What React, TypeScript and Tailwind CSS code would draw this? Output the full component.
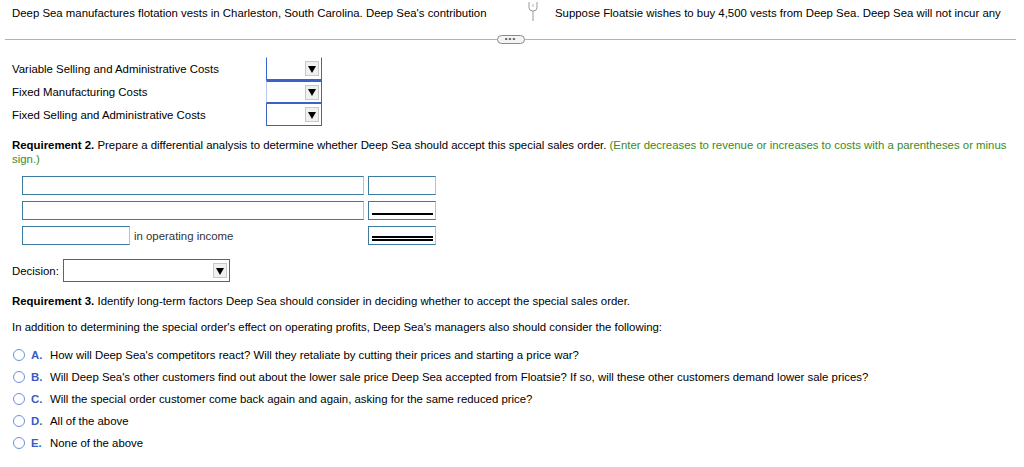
import React from 'react';

const font = { fontFamily: '"Liberation Sans", Arial, sans-serif' };

function Arrow() {
  return (
    <span className="flex h-[15px] w-[14px] items-center justify-center border border-[#c8c8c8] bg-[#f0f0f0]">
      <svg width="8" height="8" viewBox="0 0 8 8">
        <polygon points="0,1 8,1 4,8" fill="#000" />
      </svg>
    </span>
  );
}

function Select({ w, extra = '' }: { w: string; extra?: string }) {
  return (
    <div className={`flex h-[23px] items-center justify-end border border-[#3b62c6] bg-white pr-[2px] ${w} ${extra}`}>
      <Arrow />
    </div>
  );
}

function Box({ w, line }: { w: string; line?: 'single' | 'double' }) {
  return (
    <div className={`relative h-[19px] border border-[#3d7aa0] border-r-[#a9c6d8] bg-white ${w}`}>
      {line === 'single' && <div className="absolute bottom-[4px] left-[3px] right-[2px] h-[2px] bg-black" />}
      {line === 'double' && (
        <div className="absolute bottom-[3px] left-[3px] right-[2px] flex flex-col gap-[1px]">
          <div className="h-[2px] bg-black" />
          <div className="h-[2px] bg-black" />
        </div>
      )}
    </div>
  );
}

const options = [
  ['A.', "How will Deep Sea's competitors react? Will they retaliate by cutting their prices and starting a price war?"],
  ['B.', "Will Deep Sea's other customers find out about the lower sale price Deep Sea accepted from Floatsie? If so, will these other customers demand lower sale prices?"],
  ['C.', 'Will the special order customer come back again and again, asking for the same reduced price?'],
  ['D.', 'All of the above'],
  ['E.', 'None of the above'],
];

export default function App() {
  return (
    <div className="h-[467px] w-[1024px] overflow-hidden bg-white text-[11.4px] leading-[14px] text-black" style={font}>
      {/* top split panes */}
      <div className="flex h-[33px] items-start">
        <div className="w-[518px] pl-[12px] pt-[6px]">
          Deep Sea manufactures flotation vests in Charleston, South Carolina. Deep Sea's contribution
        </div>
        <div className="w-[37px] pl-[9px] pt-[1px]">
          <svg width="12" height="20" viewBox="0 0 12 20">
            <path d="M2 1 V7 Q2 10 6 10 Q10 10 10 7 V1" fill="none" stroke="#9a9a9a" strokeWidth="1" />
            <line x1="6" y1="10" x2="6" y2="20" stroke="#9a9a9a" strokeWidth="1" />
            <line x1="6" y1="3" x2="6" y2="6" stroke="#b5b5b5" strokeWidth="1" />
          </svg>
        </div>
        <div className="flex-1 pt-[6px]">
          Suppose Floatsie wishes to buy 4,500 vests from Deep Sea. Deep Sea will not incur any
        </div>
      </div>

      {/* divider */}
      <div className="flex h-[12px] items-center pl-[5px] pr-[8px]">
        <div className="h-px flex-1 bg-[#b3b3b3]" />
        <div className="flex h-[9px] w-[28px] items-center justify-center rounded-full border border-[#8a8a8a] bg-[#f4f4f4]">
          <span className="text-[8px] leading-[8px] tracking-[1px] text-[#555]">•••</span>
        </div>
        <div className="h-px flex-1 bg-[#b3b3b3]" />
      </div>

      <div className="pl-[12px] pr-[12px]">
        {/* cost rows */}
        <div className="mt-[12px] flex flex-col">
          {['Variable Selling and Administrative Costs', 'Fixed Manufacturing Costs', 'Fixed Selling and Administrative Costs'].map((t, i) => (
            <div key={t} className="flex h-[23px] items-center">
              <div className="w-[254px]">{t}</div>
              <Select w="w-[56px]" extra={i === 0 ? 'border-t-white' : i === 1 ? 'border-l-[#b8c8ef] border-t-2' : ''} />
            </div>
          ))}
        </div>

        {/* requirement 2 */}
        <p className="mt-[12px]">
          <b>Requirement 2.</b> Prepare a differential analysis to determine whether Deep Sea should accept this special sales order.{' '}
          <span className="text-[#3a8a1c]">(Enter decreases to revenue or increases to costs with a parentheses or minus sign.)</span>
        </p>

        <div className="ml-[10px] mt-[10px] flex flex-col gap-[6px]">
          <div className="flex gap-[4px]">
            <Box w="w-[342px]" />
            <Box w="w-[68px]" />
          </div>
          <div className="flex gap-[4px]">
            <Box w="w-[342px]" />
            <Box w="w-[68px]" line="single" />
          </div>
          <div className="flex items-center gap-[4px]">
            <Box w="w-[108px]" />
            <div className="w-[230px] text-[#333]">in operating income</div>
            <Box w="w-[68px]" line="double" />
          </div>
        </div>

        {/* decision */}
        <div className="mt-[14px] flex items-center gap-[4px]">
          <span>Decision:</span>
          <Select w="w-[167px]" />
        </div>

        <p className="mt-[12px]">
          <b>Requirement 3.</b> Identify long-term factors Deep Sea should consider in deciding whether to accept the special sales order.
        </p>
        <p className="mt-[12px]">
          In addition to determining the special order's effect on operating profits, Deep Sea's managers also should consider the following:
        </p>

        <div className="mt-[14px] flex flex-col gap-[8px]">
          {options.map(([l, t]) => (
            <div key={l} className="flex items-center">
              <span className="ml-[1px] h-[12px] w-[12px] rounded-full border border-[#6f8fd8] bg-white" />
              <span className="ml-[6px] w-[19px] font-bold text-[#3a5cc4]">{l}</span>
              <span>{t}</span>
            </div>
          ))}
        </div>
      </div>
    </div>
  );
}
